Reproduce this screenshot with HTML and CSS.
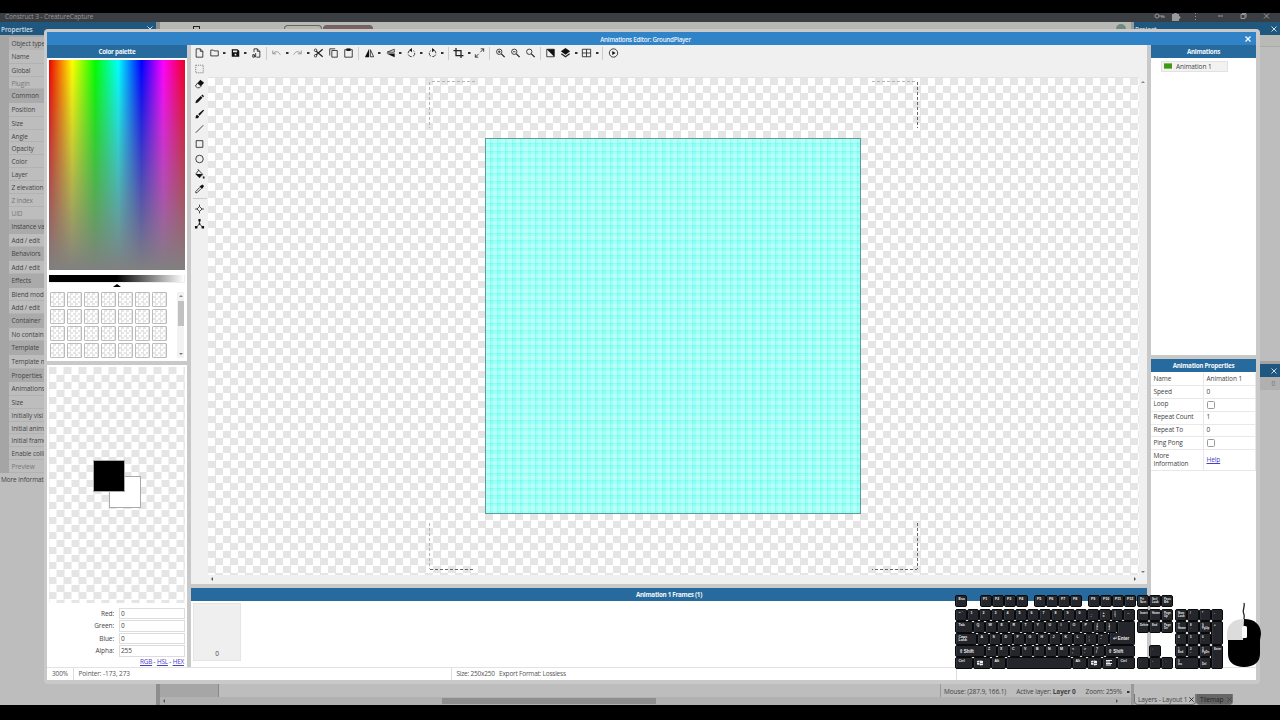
FILE: index.html
```
<!DOCTYPE html>
<html lang="en">
<head>
    <meta charset="UTF-8">
    <meta name="viewport" content="width=device-width, initial-scale=1.0">
    <title>Construct 3 - CreatureCapture</title>
    <link rel="stylesheet" href="styles.css">
</head>
<body>
    <svg class="defs" width="0" height="0">
        <symbol id="close" viewBox="0 0 8 8"><path d="M1.5 1.5l5 5M6.5 1.5l-5 5"/></symbol>
        <symbol id="new" viewBox="0 0 12 12"><path d="M2 1h5l3 3v7H2zM7 1v3h3"/></symbol>
        <symbol id="open" viewBox="0 0 12 12"><path d="M1.5 2.5h3l1 1h5v6h-9z"/></symbol>
        <symbol id="save" viewBox="0 0 12 12"><path class="f" d="M1.5 1.5h7l2 2v7h-9z"/><path class="w" d="M3 3h5v2H3zM5 7h2v2H5z"/></symbol>
        <symbol id="export" viewBox="0 0 12 12"><path d="M3 5V1h4l3 3v7H6M7 1v3h3M5 6v5M3 8.500l2 2.500M1.500 8h2v3h-2z"/></symbol>
        <symbol id="undo" viewBox="0 0 12 12"><path d="M1.500 3v4h4M2 6.500c3-3 6-3 8.500 1.500"/></symbol>
        <symbol id="redo" viewBox="0 0 12 12"><path d="M10.500 3v4h-4M10 6.500c-3-3-6-3-8.500 1.500"/></symbol>
        <symbol id="cut" viewBox="0 0 12 12"><path class="b" d="M3 3.500l8 7M3 8.500l8-7"/><circle cx="2.500" cy="2.700" r="1.500"/><circle cx="2.500" cy="9.300" r="1.500"/></symbol>
        <symbol id="copy" viewBox="0 0 12 12"><path d="M4 3h6.500v8H4zM1.500 9V1H8"/></symbol>
        <symbol id="paste" viewBox="0 0 12 12"><path d="M1.500 2h9v9h-9z"/><path class="f" d="M3.500 .5h5v3h-5z"/></symbol>
        <symbol id="mirror" viewBox="0 0 12 12"><path class="f" d="M5.500 1v10H.5z"/><path d="M7 2v8.500h4z"/></symbol>
        <symbol id="flip" viewBox="0 0 12 12"><path class="f" d="M11 6.500v4.500L1 6.500z"/><path d="M10.500 1.500V5H2z"/></symbol>
        <symbol id="ccw" viewBox="0 0 12 12"><path stroke-dasharray="5 1.500" d="M5 2.500a4 4 0 1 0 3 .5"/><path class="f" d="M6.500 0v5L3.500 2.500z"/></symbol>
        <symbol id="cw" viewBox="0 0 12 12"><path stroke-dasharray="5 1.500" d="M7 2.500a4 4 0 1 1-3 .5"/><path class="f" d="M5.500 0v5l3-2.500z"/></symbol>
        <symbol id="crop" viewBox="0 0 12 12"><path class="b" d="M3 0v9h9M0 3h9v9"/></symbol>
        <symbol id="resize" viewBox="0 0 12 12"><path d="M7 5l4-4M7.500 1H11v3.500M5 7l-4 4M1 7.500V11h3.500"/></symbol>
        <symbol id="zoomin" viewBox="0 0 12 12"><circle cx="4.500" cy="4.500" r="3.200"/><path class="b" d="M7 7l4 4"/><path d="M3 4.500h3M4.500 3v3"/></symbol>
        <symbol id="zoomout" viewBox="0 0 12 12"><circle cx="4.500" cy="4.500" r="3.200"/><path class="b" d="M7 7l4 4"/><path d="M3 4.500h3"/></symbol>
        <symbol id="zoom" viewBox="0 0 12 12"><circle cx="4.500" cy="4.500" r="3.200"/><path class="b" d="M7 7l4 4"/></symbol>
        <symbol id="contrast" viewBox="0 0 12 12"><path d="M1.500 1.500h9v9h-9z"/><path class="f" d="M1.500 1.500h9v9z"/></symbol>
        <symbol id="onion" viewBox="0 0 12 12"><path class="f" d="M6 0l5.500 4L6 8 .5 4z"/><path class="b" d="M1 7l5 3.500L11 7"/></symbol>
        <symbol id="grid" viewBox="0 0 12 12"><path d="M1 1.500h10v9H1zM6 1.500v9M1 6h10"/></symbol>
        <symbol id="play" viewBox="0 0 12 12"><circle cx="6" cy="6" r="5"/><path class="f" d="M4.500 3.500v5l4-2.500z"/></symbol>
        <symbol id="select" viewBox="0 0 12 12"><path stroke="#777" stroke-dasharray="1.500 1" d="M1.500 1.500h9v9h-9z"/></symbol>
        <symbol id="eraser" viewBox="0 0 12 12"><path class="f" d="M7 1l4.500 3.500-3.500 4L3.500 5z"/><path d="M3.500 5l4.500 3.500L6 10.500H3.500L1 8.500z"/></symbol>
        <symbol id="pencil" viewBox="0 0 12 12"><path class="f" d="M1 11l.8-3L7.500 2.500l2 2L4 10.200zM8.200 1.800L9.500.7l2 2-1.200 1.200z"/></symbol>
        <symbol id="brush" viewBox="0 0 12 12"><path class="f" d="M4.500 6L10.500.8l1 1L6 8zM1 11c.8-.8 0-3 2-4l2.500 2C5 11 3 11.500 1 11z"/></symbol>
        <symbol id="line" viewBox="0 0 12 12"><path d="M1.500 10.500l9-9"/></symbol>
        <symbol id="rect" viewBox="0 0 12 12"><path d="M2 2h8v8H2z"/></symbol>
        <symbol id="ellipse" viewBox="0 0 12 12"><circle cx="6" cy="6" r="4.500"/></symbol>
        <symbol id="fill" viewBox="0 0 12 12"><path d="M5 1.500l5 5-4 4-4.500-4.500zM3.500 0l2 2"/><path class="f" d="M1.500 6h8L6 10.500zM10 9h2v2.500h-2z"/></symbol>
        <symbol id="picker" viewBox="0 0 12 12"><path class="f" d="M6 3L9.500.5l2 2L9 6z"/><path d="M6.500 4l-5 5v1.500H3l5-5"/></symbol>
        <symbol id="origin" viewBox="0 0 12 12"><path d="M6 3l3 3-3 3-3-3zM6 .8v2.200M6 9v2.200M.8 6H3M9 6h2.200"/></symbol>
        <symbol id="polygon" viewBox="0 0 12 12"><path d="M6 2v4L2 10M6 6l4 4"/><path class="f" d="M4.700 0h2.600v3H4.700zM.5 8.500h3v3h-3zM8.500 8.500h3v3h-3zM5 5h2v2H5z"/></symbol>
    </svg>

    <div class="browser">
        <span class="browser-title">Construct 3 - CreatureCapture</span>
        <svg class="browser-icons" viewBox="0 0 130 9">
            <circle cx="7" cy="3" r="2"/><path d="M9 3h5v2M12 3v2"/>
            <path class="solid" d="M22 1h2c0-2 3-2 3 0h2v2c2 0 2 3 0 3v2h-7z"/>
            <path class="solid" d="M45 0h1v1h-1zM45 3h1v1h-1zM45 6h1v1h-1z"/>
            <path d="M68 3h5M91 1.500h4v4h-4zM92 .5h4v4M114 .5l5 5M119 .5l-5 5"/>
        </svg>
    </div>

    <div class="app">
        <div class="properties">
            <div class="dark-header">Properties<svg><use href="#close"/></svg></div>
            <div class="prop-list">
                <h4>Object type</h4>
                <p>Name</p><p>Global</p><p class="dim">Plugin</p>
                <h4>Common</h4>
                <p>Position</p><p>Size</p><p>Angle</p><p>Opacity</p><p>Color</p><p>Layer</p><p>Z elevation</p><p class="dim">Z index</p><p class="dim">UID</p>
                <h4>Instance va</h4>
                <p>Add / edit</p>
                <h4>Behaviors</h4>
                <p>Add / edit</p>
                <h4>Effects</h4>
                <p>Blend mode</p><p>Add / edit</p>
                <h4>Container</h4>
                <p>No contain</p>
                <h4>Template</h4>
                <p>Template m</p>
                <h4>Properties</h4>
                <p>Animations</p><p>Size</p><p>Initially visi</p><p>Initial anim</p><p>Initial frame</p><p>Enable colli</p><p class="dim">Preview</p>
            </div>
            <div class="more">More informat</div>
        </div>
        <div class="layout">
            <div class="layout-top">
                <span class="bit"></span><span class="tab"></span><span class="tab red"></span><span class="avatar"></span>
            </div>
            <div class="layout-bottom">
                <div class="layout-status">
                    <span class="stub"></span>
                    <div class="info"><span>Mouse: (287.9, 166.1)</span><span>Active layer: <b>Layer 0</b></span><span>Zoom: 259%</span><i class="caret"></i></div>
                </div>
                <div class="h-scroll"><span class="arrow left"></span><span class="thumb"></span><span class="arrow right"></span></div>
            </div>
        </div>
        <div class="project">
            <div class="dark-header">Project<svg><use href="#close"/></svg></div>
            <div class="project-search"></div>
            <div class="project-tree"></div>
            <div class="dark-header"><svg><use href="#close"/></svg></div>
            <div class="layer-row">0</div>
            <div class="project-tabs"><span>Layers - Layout 1<svg><use href="#close"/></svg></span><span class="off">Tilemap<svg><use href="#close"/></svg></span></div>
        </div>
    </div>
    <div class="letterbox"></div>

    <div class="dialog">
        <div class="dialog-title">Animations Editor: GroundPlayer<svg><use href="#close"/></svg></div>
        <div class="dialog-body">
            <div class="left">
                <div class="header">Color palette</div>
                <div class="palette">
                    <div class="hue"></div>
                    <div class="light"></div>
                    <div class="light-mark"></div>
                    <div class="swatches">
                        <div class="swatch-grid">
                            <i></i><i></i><i></i><i></i><i></i><i></i><i></i>
                            <i></i><i></i><i></i><i></i><i></i><i></i><i></i>
                            <i></i><i></i><i></i><i></i><i></i><i></i><i></i>
                            <i></i><i></i><i></i><i></i><i></i><i></i><i></i>
                        </div>
                        <div class="v-scroll"><span class="arrow up"></span><span class="thumb"></span><span class="arrow down"></span></div>
                    </div>
                </div>
                <div class="current">
                    <div class="preview checker">
                        <span class="back"></span>
                        <span class="front"></span>
                    </div>
                    <div class="channels">
                        <label>Red:</label><span class="value">0</span>
                        <label>Green:</label><span class="value">0</span>
                        <label>Blue:</label><span class="value">0</span>
                        <label>Alpha:</label><span class="value">255</span>
                    </div>
                    <div class="modes"><a>RGB</a> - <a>HSL</a> - <a>HEX</a></div>
                </div>
            </div>

            <div class="main">
                <div class="toolbar">
                    <svg><use href="#new"/></svg>
                    <svg><use href="#open"/></svg><i class="caret"></i>
                    <svg><use href="#save"/></svg><i class="caret"></i>
                    <svg><use href="#export"/></svg><i class="sep"></i>
                    <svg class="off"><use href="#undo"/></svg><i class="caret"></i>
                    <svg class="off"><use href="#redo"/></svg><i class="caret"></i>
                    <svg><use href="#cut"/></svg>
                    <svg><use href="#copy"/></svg>
                    <svg><use href="#paste"/></svg><i class="sep"></i>
                    <svg><use href="#mirror"/></svg><i class="caret"></i>
                    <svg><use href="#flip"/></svg><i class="caret"></i>
                    <svg><use href="#ccw"/></svg><i class="caret"></i>
                    <svg><use href="#cw"/></svg><i class="caret"></i><i class="sep"></i>
                    <svg><use href="#crop"/></svg><i class="caret"></i>
                    <svg><use href="#resize"/></svg><i class="sep"></i>
                    <svg><use href="#zoomin"/></svg>
                    <svg><use href="#zoomout"/></svg>
                    <svg><use href="#zoom"/></svg><i class="sep"></i>
                    <svg><use href="#contrast"/></svg>
                    <svg><use href="#onion"/></svg><i class="caret"></i>
                    <svg><use href="#grid"/></svg><i class="caret"></i><i class="sep"></i>
                    <svg><use href="#play"/></svg>
                </div>
                <div class="workspace">
                    <div class="tools">
                        <svg><use href="#select"/></svg>
                        <svg><use href="#eraser"/></svg>
                        <svg><use href="#pencil"/></svg>
                        <svg><use href="#brush"/></svg>
                        <svg><use href="#line"/></svg>
                        <svg><use href="#rect"/></svg>
                        <svg><use href="#ellipse"/></svg>
                        <svg><use href="#fill"/></svg>
                        <svg><use href="#picker"/></svg>
                        <i class="rule"></i>
                        <svg><use href="#origin"/></svg>
                        <svg><use href="#polygon"/></svg>
                    </div>
                    <div class="canvas-area">
                        <div class="canvas checker">
                            <div class="sprite"></div>
                            <svg class="handles" viewBox="0 0 490 490">
                                <path class="pale" d="M46 1H1v46M1 443v46M444 1h45"/>
                                <path d="M489 1v46M489 443v46h-45M1 489h45"/>
                            </svg>
                        </div>
                        <div class="canvas-v"><span class="arrow up"></span><span class="arrow down"></span></div>
                        <div class="canvas-h"><span class="arrow left"></span><span class="arrow right"></span></div>
                    </div>
                </div>
                <div class="frames">
                    <div class="header">Animation 1 Frames (1)</div>
                    <div class="frame">0</div>
                </div>
            </div>

            <div class="right">
                <div class="header">Animations</div>
                <div class="animations">
                    <div class="animation"><i></i>Animation 1</div>
                </div>
                <div class="header">Animation Properties</div>
                <div class="table">
                    <span>Name</span><span>Animation 1</span>
                    <span>Speed</span><span>0</span>
                    <span>Loop</span><span><i class="check"></i></span>
                    <span>Repeat Count</span><span>1</span>
                    <span>Repeat To</span><span>0</span>
                    <span>Ping Pong</span><span><i class="check"></i></span>
                    <span class="tall">More Information</span><span class="tall"><a>Help</a></span>
                </div>
            </div>
        </div>
        <div class="status">
            <span class="zoom">300%</span>
            <span class="pointer">Pointer: -173, 273</span>
            <span class="size">Size: 250x250 &nbsp; Export Format: Lossless</span>
            <span></span>
        </div>
    </div>

    <!-- input overlay -->
    <div class="keyboard">
        <div class="fn">
            <b>Esc</b><b class="gap1">F1</b><b>F2</b><b>F3</b><b>F4</b><b class="gap2">F5</b><b>F6</b><b>F7</b><b>F8</b><b class="gap2">F9</b><b>F10</b><b>F11</b><b>F12</b><b class="gap3 small">Prt Scrn</b><b class="small">Scrl Lock</b><b class="small">Paus Brk</b>
        </div>
        <div class="blocks">
            <div class="letters">
                <div><b>~ `</b><b>1</b><b>2</b><b>3</b><b>4</b><b>5</b><b>6</b><b>7</b><b>8</b><b>9</b><b>0</b><b>_<br>-</b><b>+<br>=</b><b>|<br>\</b><b>&#8592;</b></div>
                <div><b class="u15">Tab</b><b>Q</b><b>W</b><b>E</b><b>R</b><b>T</b><b>Y</b><b>U</b><b>I</b><b>O</b><b>P</b><b>{<br>[</b><b>}<br>]</b><b class="enter-top"></b></div>
                <div><b class="u18">Caps<br>Lock</b><b>A</b><b>S</b><b>D</b><b>F</b><b>G</b><b>H</b><b>J</b><b>K</b><b>L</b><b>:<br>;</b><b>"<br>'</b><b class="enter big">&#8629; Enter</b></div>
                <div><b class="u24 big">&#8679; Shift</b><b>Z</b><b>X</b><b>C</b><b>V</b><b>B</b><b>N</b><b>M</b><b>&lt;<br>,</b><b>&gt;<br>.</b><b>?<br>/</b><b class="fill big">&#8679; Shift</b></div>
                <div><b class="u15">Ctrl</b><b class="u15 win"><svg viewBox="0 0 6 6"><path d="M0 1l2.500-.5v2H0zM3 .5L6 1v2H3zM0 3h2.500v2L0 4.500zM3 3.400h3V5L3 5.500z"/></svg></b><b class="u13">Alt</b><b class="fill"></b><b class="u13">Alt</b><b class="u13 win"><svg viewBox="0 0 6 6"><path d="M0 1l2.500-.5v2H0zM3 .5L6 1v2H3zM0 3h2.500v2L0 4.500zM3 3.400h3V5L3 5.500z"/></svg></b><b class="u13 win"><svg viewBox="0 0 6 6"><path d="M0 0h6v1H0zM0 1.500h4v1H0zM0 3h6v1H0zM0 4.500h5v1H0z"/></svg></b><b class="u15">Ctrl</b></div>
            </div>
            <div class="nav small-keys">
                <b>Insert</b><b>Home</b><b>Page<br>Up</b>
                <b>Delete</b><b>End</b><b>Page<br>Dn</b>
                <b class="up">&#8593;</b>
                <b class="arrow-left">&#8592;</b><b class="arrow-down">&#8595;</b><b class="arrow-right">&#8594;</b>
            </div>
            <div class="numpad small-keys">
                <b>Num<br>Lock</b><b>/</b><b>*</b><b>-</b>
                <b>7<br>Home</b><b>8<br>&#8593;</b><b>9<br>PgUp</b><b class="high">+</b>
                <b>4<br>&#8592;</b><b>5</b><b>6<br>&#8594;</b>
                <b>1<br>End</b><b>2<br>&#8595;</b><b>3<br>PgDn</b><b class="high">Enter</b>
                <b class="wide">0<br>Ins</b><b>.<br>Del</b>
            </div>
        </div>
    </div>
    <svg class="mouse" viewBox="0 0 36 66">
        <path class="cord" d="M18 1c1.500 4-2 7-.5 10s.5 4 .5 6"/>
        <path d="M18 17C29 17 35 23 35 32l-1 6v14c0 8-6 13-16 13S2 60 2 52V38z"/>
        <path class="button" d="M18 17C7 17 1 23 1 32v6h16z"/>
        <rect class="wheel" x="16" y="24" width="5" height="12" rx="1.500"/>
    </svg>
</body>
</html>
```
FILE: styles.css
```
* {
    box-sizing: border-box;
}
body {
    margin: 0;
    width: 1280px;
    height: 720px;
    padding-top: 13px;
    overflow: hidden;
    position: relative;
    background-color: black;
    color: #444;
    font-family: "Open Sans", "Noto Sans", sans-serif;
    font-size: 6.5px;
    letter-spacing: -0.1px;
    line-height: 9px;
}
.defs {
    position: absolute;
}
svg {
    fill: none;
    stroke: #222;
    stroke-width: 1;
}
svg .f {
    fill: #111;
    stroke: none;
}
svg .w {
    fill: #eee;
    stroke: none;
}
svg .b {
    stroke-width: 1.5;
}
h4, p {
    margin: 0;
    font-weight: normal;
}

/* browser window behind the dialog */
.browser {
    height: 9px;
    display: flex;
    justify-content: space-between;
    background-color: #3b3e42;
    color: #999;
}
.browser-title {
    margin-top: -1px;
    padding-left: 5px;
    white-space: nowrap;
}
.browser-icons {
    width: 130px;
    height: 9px;
    stroke: #999;
}
.browser-icons .solid {
    fill: #999;
    stroke: none;
}
.app {
    height: 683px;
    display: flex;
    background-color: #bdbdbd;
}
.dark-header {
    height: 13px;
    flex: none;
    display: flex;
    align-items: center;
    justify-content: space-between;
    padding: 1px 2px 0 1px;
    background-color: #20577f;
    color: #cfdce6;
    font-weight: 600;
}
.dark-header svg {
    width: 8px;
    height: 8px;
    margin-left: auto;
    stroke: #cfdce6;
}
.properties {
    width: 156px;
    overflow: hidden;
    white-space: nowrap;
}
.prop-list {
    padding: 1.5px 0 0 9px;
    background-color: #a5a5a5;
}
.prop-list h4 {
    height: 13.8px;
    padding-left: 2.5px;
    line-height: 14px;
    background-color: #aaa;
}
.prop-list h4:first-child {
    background-color: #b4b4b4;
}
.prop-list p {
    height: 12.9px;
    padding-left: 2.5px;
    line-height: 13px;
    background-color: #bdbdbd;
    border-bottom: 1px solid #b2b2b2;
}
.prop-list h4 + p {
    height: 13.4px;
}
.prop-list .dim {
    color: #777;
}
.more {
    padding: 1px;
    line-height: 11px;
}
.layout {
    flex: 1;
    display: flex;
    flex-direction: column;
    justify-content: space-between;
    border-left: 4px solid #8e8e8e;
    border-right: 3px solid #999;
}
.layout-top {
    height: 7px;
    display: flex;
    align-items: flex-end;
    background-color: #b7b7b4;
}
.layout-top .bit {
    width: 7px;
    height: 3px;
    margin-left: 33px;
    border: 1px solid #222;
    border-bottom: 0;
}
.layout-top .tab {
    width: 38px;
    height: 4px;
    margin-left: 84px;
    border: 1px solid #666;
    border-bottom: 0;
    border-radius: 4px 4px 0 0;
    background-color: #b9b8a8;
}
.layout-top .red {
    width: 50px;
    margin-left: 1px;
    background-color: #7c6262;
}
.layout-top .avatar {
    width: 10px;
    height: 5px;
    margin-left: 743px;
    border-radius: 5px 5px 0 0;
    background-color: #6d8a80;
}
.layout-status {
    height: 13px;
    display: flex;
    justify-content: space-between;
}
.layout-status .stub {
    width: 59px;
    background-color: #a6a6a6;
    border-right: 1px solid #888;
}
.info {
    width: 191px;
    display: flex;
    align-items: center;
    gap: 10px;
    padding: 2px 0 0 3px;
    border-left: 1px solid #999;
    white-space: nowrap;
}
.info .caret {
    margin-left: -7px;
}
.h-scroll {
    height: 8px;
    display: flex;
    align-items: center;
    background-color: #b1b1b1;
}
.h-scroll .thumb {
    width: 214px;
    height: 6px;
    margin: 0 460px 0 277px;
    background-color: #8e8e8e;
}
.project {
    width: 146px;
    display: flex;
    flex-direction: column;
}
.project-search {
    height: 12px;
    background-color: #b9b9b6;
    border-bottom: 1px solid #aaa;
}
.project-tree {
    height: 317px;
    border-bottom: 3px solid #a3a3a3;
}
.layer-row {
    height: 13px;
    padding: 2px 5px;
    text-align: right;
    color: #777;
    background-color: #b0b0b0;
}
.project-tabs {
    margin-top: auto;
    height: 11px;
    display: flex;
}
.project-tabs span {
    display: flex;
    align-items: center;
    gap: 1px;
    width: 62px;
    padding-left: 3px;
    border: 1px solid #777;
    border-top: 0;
    border-radius: 0 0 4px 4px;
    white-space: nowrap;
}
.project-tabs .off {
    width: 37px;
    background-color: #666;
    color: #222;
}
.project-tabs svg {
    width: 7px;
    height: 7px;
    flex: none;
}
.project-tabs .off svg {
    margin-left: 2px;
    stroke: #444;
}
.letterbox {
    height: 15px;
    background-color: black;
}

/* little triangles */
.caret {
    display: block;
    flex: none;
    width: 6px;
    height: 2px;
    background: linear-gradient(#333, #333) center / 2.5px 2px no-repeat;
}
.arrow {
    flex: none;
    width: 0;
    height: 0;
    border: 2px solid transparent;
}
.arrow.up {
    border-bottom-color: #888;
    border-top: 0;
}
.arrow.down {
    border-top-color: #777;
    border-bottom: 0;
}
.arrow.left {
    border-right-color: #555;
    border-left: 0;
    margin-left: 3px;
}
.arrow.right {
    border-left-color: #555;
    border-right: 0;
}
.checker {
    background-color: white;
    background-image: conic-gradient(#e5e5e5 25%, #fff 0 50%, #e5e5e5 0 75%, #fff 0);
    background-size: 15px 15px;
}

/* animations editor */
.dialog {
    position: absolute;
    left: 44px;
    top: 29px;
    width: 1216px;
    height: 655px;
    border: 3px solid #c9c9c9;
    border-bottom-width: 4px;
    border-right-width: 4px;
    border-radius: 4px;
    background-color: #c9c9c9;
}
.dialog-title {
    height: 13px;
    display: flex;
    align-items: center;
    background-color: #3083c7;
    color: #e6f1fa;
    font-size: 6.3px;
    font-weight: 600;
    letter-spacing: -0.3px;
    justify-content: center;
    padding: 1px 12px 0 0;
}
.dialog-title svg {
    width: 8px;
    height: 8px;
    margin-right: -8px;
    position: relative;
    left: 553px;
    stroke: white;
    stroke-width: 1.3;
}
.dialog-body {
    height: 622px;
    display: grid;
    grid-template-columns: 140px 956px 105px;
    column-gap: 4px;
}
.header {
    height: 13px;
    line-height: 14px;
    flex: none;
    background-color: #276b9e;
    color: #f2f7fb;
    font-size: 6.3px;
    font-weight: 700;
    letter-spacing: -0.3px;
    text-align: center;
}
.left, .main, .right {
    display: flex;
    flex-direction: column;
    min-width: 0;
}
.palette {
    height: 303px;
    padding: 2px;
    background-color: white;
}
.hue {
    height: 210px;
    background: linear-gradient(rgba(128, 128, 128, 0), #808080), linear-gradient(to right, #f00000, #ff0 17%, #0f0 34%, #0ff 51%, #00f 68%, #f0f 84%, #f00020);
}
.light {
    height: 8px;
    margin-top: 5px;
    border: 1px solid #eee;
    border-width: 0 1px 1px 0;
    background: linear-gradient(to right, black 50%, white);
}
.light-mark {
    width: 0;
    margin: 1px auto 0;
    border: 4px solid transparent;
    border-top: 0;
    border-bottom: 3.5px solid black;
}
.swatches {
    display: flex;
    justify-content: space-between;
    padding: 5px 1px 0;
}
.swatch-grid {
    display: grid;
    grid-template-columns: repeat(7, 15px);
    gap: 2px;
}
.swatch-grid i {
    height: 15px;
    border: 1px solid #bbb;
    border-radius: 1px;
    background: conic-gradient(#e5e5e5 25%, #fff 0 50%, #e5e5e5 0 75%, #fff 0) 0 0 / 5px 5px;
}
.v-scroll {
    width: 7px;
    height: 66px;
    display: flex;
    flex-direction: column;
    align-items: center;
    padding: 3px 0;
    background-color: #f2f2f2;
}
.v-scroll .thumb {
    width: 6px;
    height: 25px;
    margin: 4px 0 auto;
    background-color: #c1c1c1;
}
.current {
    flex: 1;
    margin-top: 4px;
    padding: 2px 2px 0;
    background-color: white;
}
.preview {
    height: 236px;
    position: relative;
    background-position: 7.5px 0;
}
.preview span {
    position: absolute;
    width: 32px;
    height: 32px;
    border: 1px solid #aaa;
}
.preview .back {
    left: 60px;
    top: 109px;
    background-color: white;
}
.preview .front {
    left: 44px;
    top: 93px;
    background-color: black;
}
.channels {
    display: grid;
    grid-template-columns: 1fr 66px;
    gap: 1px 5px;
    margin-top: 4.5px;
    text-align: right;
    line-height: 11px;
}
.channels .value {
    height: 11.6px;
    padding-left: 1px;
    border: 1px solid #ddd;
    line-height: 10px;
    text-align: left;
}
.modes {
    text-align: right;
    padding: 0 1px;
    font-size: 6.4px;
    letter-spacing: -0.2px;
}
a {
    color: #4a3fc5;
    text-decoration: underline;
}

.toolbar {
    height: 16.5px;
    display: flex;
    align-items: center;
    padding-left: .6px;
    background-color: #f0f0f0;
}
.toolbar svg, .tools svg {
    width: 15px;
    height: 10px;
    flex: none;
}
.toolbar .off {
    stroke: #888;
}
.toolbar .sep {
    width: 5.5px;
    height: 13px;
    background: linear-gradient(#ccc, #ccc) center / 1px 100% no-repeat;
}
.workspace {
    height: 522.5px;
    display: flex;
    background-color: #f0f0f0;
}
.tools {
    width: 16.5px;
    display: flex;
    flex-direction: column;
    gap: 5px;
    padding: 2.5px 0 0 .6px;
}
.tools .rule {
    height: 1px;
    margin: -1px 1px 0;
    background-color: #ccc;
}
.canvas-area {
    flex: 1;
    display: grid;
    grid-template: 498px 8px / 931.5px 8px;
    padding-top: 15.5px;
}
.canvas {
    position: relative;
    border: 1px solid #e2e2e2;
    border-width: 1px 0 0;
    overflow: hidden;
}
.sprite {
    position: absolute;
    left: 277.5px;
    top: 60px;
    width: 376px;
    height: 376px;
    border: 1px solid #5f9c99;
    background-color: #8bfff5;
    background-image:
        repeating-linear-gradient(to right, rgba(255, 255, 255, .22) 0 4px, rgba(0, 240, 210, .13) 4px 5px, rgba(255, 255, 255, 0) 5px 7.5px),
        repeating-linear-gradient(rgba(255, 255, 255, .22) 0 4px, rgba(0, 240, 210, .13) 4px 5px, rgba(255, 255, 255, 0) 5px 7.5px);
}
.handles {
    position: absolute;
    left: 221px;
    top: 3px;
    width: 489px;
    height: 489px;
    stroke: #666;
    stroke-dasharray: 3 2;
    shape-rendering: crispEdges;
}
.handles .pale {
    stroke: #b5b5b5;
}
.canvas-v {
    display: flex;
    flex-direction: column;
    align-items: center;
    justify-content: space-between;
    padding: 4px 0 2px;
}
.canvas-h {
    display: flex;
    align-items: center;
    justify-content: space-between;
    padding-right: 3px;
}
.frames {
    flex: 1;
    margin-top: 4px;
    background-color: white;
}
.frame {
    width: 48px;
    height: 58px;
    margin: 2px;
    padding-top: 45px;
    border: 1px solid #e5e5e5;
    background-color: #efefef;
    text-align: center;
}

.animations {
    height: 297px;
    margin-bottom: 4px;
    padding: 2.5px 10px;
    background-color: white;
}
.animation {
    width: 67px;
    height: 11px;
    display: flex;
    align-items: center;
    gap: 4px;
    padding-left: 2px;
    border: 1px solid #e2e2e2;
    background-color: #f2f2f2;
}
.animation i {
    width: 8px;
    height: 6px;
    border-top: 1px solid #7fbf4d;
    border-bottom: 1px solid #7fbf4d;
    background-color: #3c9a18;
}
.table {
    flex: 1;
    display: grid;
    grid-template-columns: 53px 52px;
    grid-auto-rows: 12.9px;
    align-content: start;
    padding-top: 1px;
    background-color: white;
}
.table span {
    display: flex;
    align-items: center;
    padding-left: 2.5px;
    border-bottom: 1px solid #e8e8e8;
    border-right: 1px solid #e8e8e8;
    line-height: 8.5px;
}
.table .tall {
    height: 21px;
}
.check {
    width: 8px;
    height: 8px;
    margin-left: .5px;
    border: 1px solid #999;
    border-radius: 1.5px;
}
.status {
    height: 13px;
    display: flex;
    border-top: 1px solid #e2e2e2;
    background-color: white;
    line-height: 12px;
    color: #555;
}
.status span {
    padding-left: 5px;
    border-right: 1px solid #ddd;
}
.status .zoom {
    width: 26.5px;
}
.status .pointer {
    width: 378px;
}
.status .size {
    width: 505px;
    letter-spacing: -0.22px;
}
.status span:last-child {
    flex: 1;
    border: 0;
}

/* keyboard, 12px per key unit */
.keyboard {
    position: absolute;
    left: 955px;
    top: 595px;
    width: 268px;
    font-family: "Liberation Sans", sans-serif;
    letter-spacing: 0;
}
.keyboard b {
    width: 12px;
    height: 12px;
    flex: none;
    padding: 2px 0 0 2.5px;
    border: 1px solid #08090b;
    border-radius: 2px;
    background-color: #24262b;
    box-shadow: inset 1px 0 #34363c;
    color: #eee;
    font-size: 3.6px;
    line-height: 3.2px;
}
.keyboard .small, .small-keys b {
    padding-left: 2px;
    font-size: 2.8px;
    line-height: 3px;
}
.keyboard .big {
    font-size: 4.5px;
    padding-top: 4px;
    white-space: nowrap;
}
.fn, .letters div {
    display: flex;
}
.keyboard .gap1 {
    margin-left: 12.5px;
}
.keyboard .gap2 {
    margin-left: 6px;
}
.keyboard .gap3 {
    margin-left: 1.5px;
}
.blocks {
    display: flex;
    gap: 2px;
    margin-top: 1.5px;
}
.letters {
    width: 180px;
}
.keyboard .u13 { width: 15px; }
.keyboard .u15 { width: 18px; }
.keyboard .u18 { width: 22px; }
.keyboard .u24 { width: 29.5px; }
.keyboard .fill {
    flex: 1;
}
.keyboard .enter-top {
    width: 18px;
    border-bottom: 0;
    border-radius: 2px 2px 0 0;
}
.keyboard .enter {
    flex: 1;
    border-top: 0;
    border-radius: 0 0 2px 2px;
}
.win svg {
    display: block;
    width: 6px;
    height: 6px;
    fill: #eee;
    stroke: none;
}
.nav {
    display: grid;
    grid-template-columns: repeat(3, 12px);
    grid-template-rows: repeat(5, 12px);
}
.nav .up {
    grid-area: 4 / 2;
}
.nav .arrow-left {
    grid-area: 5 / 1;
}
.nav .arrow-down {
    grid-area: 5 / 2;
}
.nav .arrow-right {
    grid-area: 5 / 3;
}
.numpad {
    display: grid;
    grid-template-columns: repeat(4, 12px);
    grid-template-rows: repeat(5, 12px);
}
.keyboard .high {
    grid-row: span 2;
    height: 24px;
}
.keyboard .wide {
    grid-column: span 2;
    width: 24px;
}
.mouse {
    position: absolute;
    left: 1225.5px;
    top: 602px;
    width: 36px;
    height: 66px;
    fill: black;
    stroke: none;
}
.mouse .cord {
    fill: none;
    stroke: #222;
    stroke-width: 1.3;
}
.mouse .button {
    fill: #dcdcdc;
}
.mouse .wheel {
    fill: white;
}
```
